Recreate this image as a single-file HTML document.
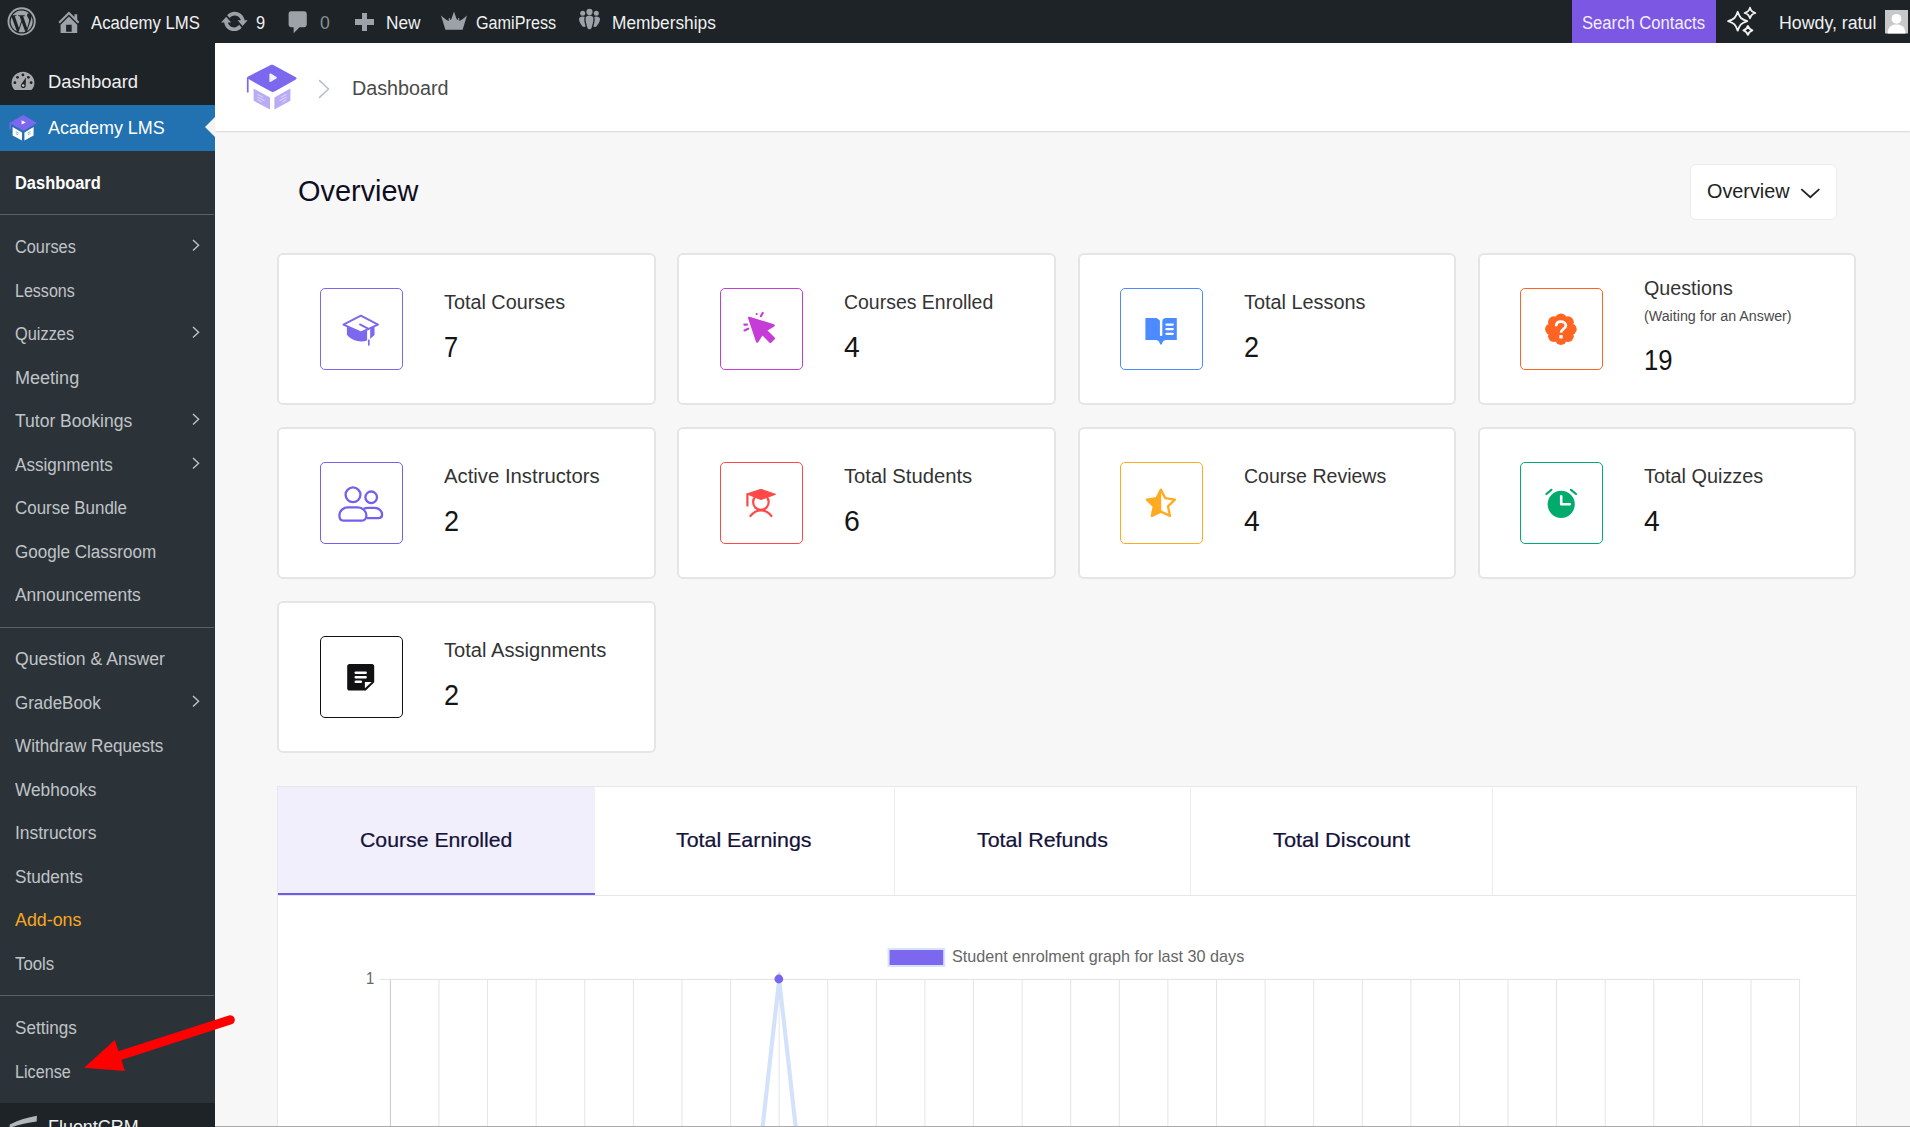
<!DOCTYPE html>
<html><head><meta charset="utf-8"><title>Dashboard</title>
<style>
*{box-sizing:border-box;margin:0;padding:0}
html,body{width:1910px;height:1127px;overflow:hidden;background:#f7f7f7;font-family:"Liberation Sans",sans-serif}
.tx{position:absolute;white-space:nowrap;transform-origin:0 50%}
.ab{position:absolute}
#adminbar{position:absolute;left:0;top:0;width:1910px;height:43px;background:#1d2327;z-index:5}
#side{position:absolute;left:0;top:43px;width:215px;height:1084px;background:#1d2327;z-index:3}
#sub{position:absolute;left:0;top:108px;width:215px;height:952px;background:#2c3338}
.sep{position:absolute;left:0;width:214px;height:1px;background:#596068}
#hdr{position:absolute;left:215px;top:43px;width:1695px;height:88px;background:#fff;box-shadow:0 1px 1.5px rgba(0,0,0,.13);z-index:2}
.card{position:absolute;width:379px;height:152px;background:#fff;border:2px solid #e5e5e7;border-radius:6px}
.ib{position:absolute;width:83px;height:82px;border:1.2px solid #7b68ee;border-radius:5px;background:#fff}
.ib svg{position:absolute;left:-1.2px;top:-1.2px;width:83px;height:82px}
</style></head><body>
<div id="adminbar">
<svg class="ab" style="left:7px;top:7px" width="30" height="30" viewBox="0 0 30 30"><circle cx="14.649999999999999" cy="14.399999999999999" r="14.1" fill="#a0a5aa"/><g transform="translate(2.450 2.200) scale(1.0167)"><path fill="#1d2327" d="M21.469 6.825c.84 1.537 1.318 3.3 1.318 5.175 0 3.979-2.156 7.456-5.363 9.325l3.295-9.527c.615-1.54.82-2.771.82-3.864 0-.405-.026-.78-.07-1.11m-7.981.105c.647-.03 1.232-.105 1.232-.105.582-.075.514-.93-.067-.899 0 0-1.755.135-2.88.135-1.064 0-2.85-.15-2.85-.15-.585-.03-.661.855-.075.885 0 0 .54.061 1.125.09l1.68 4.605-2.37 7.08L5.354 6.9c.649-.03 1.234-.1 1.234-.1.585-.075.516-.93-.065-.896 0 0-1.746.138-2.874.138-.2 0-.438-.008-.69-.015C4.911 3.15 8.235 1.215 12 1.215c2.809 0 5.365 1.072 7.286 2.833-.046-.003-.091-.009-.141-.009-1.06 0-1.812.923-1.812 1.914 0 .89.513 1.643 1.06 2.531.411.72.89 1.643.89 2.977 0 .915-.354 1.994-.821 3.479l-1.075 3.585-3.9-11.61.001.014zM12 22.784c-1.059 0-2.081-.153-3.048-.437l3.237-9.406 3.315 9.087c.024.053.05.101.078.149-1.12.393-2.325.609-3.582.609M1.211 12c0-1.564.336-3.05.935-4.39L7.29 21.709C3.694 19.960 1.212 16.271 1.211 12M12 0C5.385 0 0 5.385 0 12s5.385 12 12 12 12-5.385 12-12S18.615 0 12 0"/></g></svg>
<svg class="ab" style="left:55.4px;top:7.8px" width="27.8" height="27.8" viewBox="0 0 20 20"><path fill="#9ca2a7" fill-rule="evenodd" d="M16 8.5l1.53 1.53-1.06 1.06L10 4.62l-6.47 6.47-1.06-1.06L10 2.5l4 4v-2h2v4zm-6-2.46l6 5.99V18H4v-5.970zM12 17v-5H8v5h4z"/></svg>
<div class="tx" style="left:91.0px;top:11px;font-size:17.6px;line-height:25px;color:#f0f0f1;transform:scaleX(0.9524);">Academy LMS</div>
<svg class="ab" style="left:219.8px;top:6.9px" width="28.8" height="28.8" viewBox="0 0 20 20"><path fill="#9ca2a7" d="M10.2 3.28c3.53 0 6.43 2.61 6.92 6h2.08l-3.5 4-3.5-4h2.32c-.45-1.97-2.21-3.45-4.32-3.45-1.45 0-2.73.71-3.54 1.78L4.95 5.66C6.23 4.2 8.11 3.28 10.2 3.28zm-.4 13.44c-3.520 0-6.43-2.61-6.92-6H.8l3.5-4c1.17 1.33 2.33 2.67 3.5 4H5.48c.45 1.97 2.21 3.45 4.32 3.45 1.45 0 2.73-.71 3.54-1.78l1.71 1.95c-1.28 1.46-3.15 2.38-5.25 2.38z"/></svg>
<div class="tx" style="left:255.9px;top:11px;font-size:17.6px;line-height:25px;color:#f0f0f1;transform:scaleX(0.9316);">9</div>
<svg class="ab" style="left:288px;top:11px" width="20" height="23" viewBox="0 0 20 23"><path fill="#9ca2a7" d="M3 0.3 H16.2 C17.7 0.3 18.8 1.4 18.8 2.9 V13.6 C18.8 15.1 17.7 16.2 16.2 16.2 H11.6 L5.6 22.3 V16.2 H3 C1.5 16.2 0.6 15.1 0.6 13.6 V2.9 C0.6 1.4 1.5 0.3 3 0.3 Z"/></svg>
<div class="tx" style="left:320.0px;top:11px;font-size:17.6px;line-height:25px;color:#8c8f94;transform:scaleX(1.0033);">0</div>
<div class="ab" style="left:355px;top:19.3px;width:18.6px;height:5.7px;background:#9ca2a7"></div><div class="ab" style="left:361.5px;top:13.2px;width:5.7px;height:18.2px;background:#9ca2a7"></div>
<div class="tx" style="left:385.7px;top:11px;font-size:17.6px;line-height:25px;color:#f0f0f1;transform:scaleX(0.9817);">New</div>
<svg class="ab" style="left:440px;top:11px" width="28" height="20" viewBox="0 0 28 20"><path fill="#9ca2a7" d="M14 0.6 L16.4 7.4 C16.9 8.6 17.5 9 18.2 8.4 C17.5 7.8 18 6.8 18.9 7.2 C19.7 7.6 19.5 8.8 18.6 9 C19.6 10.6 21.6 9.4 27 4.6 L22.6 18.8 H5.4 L1 4.6 C6.4 9.4 8.4 10.6 9.4 9 C8.5 8.8 8.3 7.6 9.1 7.2 C10 6.8 10.5 7.8 9.8 8.4 C10.5 9 11.1 8.6 11.6 7.4 Z"/></svg>
<div class="tx" style="left:475.5px;top:11px;font-size:17.6px;line-height:25px;color:#f0f0f1;transform:scaleX(0.9204);">GamiPress</div>
<svg class="ab" style="left:578px;top:8px" width="23" height="22" viewBox="0 0 23 22"><g fill="#9ca2a7"><circle cx="11.5" cy="3.9" r="3.1"/><path d="M7.6 10.6 C7.6 8.6 9.3 7.6 11.5 7.6 C13.7 7.6 15.4 8.6 15.4 10.6 C15.4 14.2 14.4 17.4 13.4 20.2 C12.8 21.6 10.2 21.6 9.6 20.2 C8.6 17.4 7.6 14.2 7.6 10.6 Z"/><circle cx="4.7" cy="5.3" r="2.5"/><path d="M1 11 C1 9.2 2.6 8.4 4.7 8.4 C5.6 8.4 6.3 8.6 6.8 8.9 C6.3 9.6 6.2 10.4 6.3 11.4 C6.4 14 7 16.6 7.7 18.6 C6.4 19.4 4.8 19.2 4.2 18 C2.4 15.6 1 13.4 1 11 Z"/><circle cx="18.3" cy="5.3" r="2.5"/><path d="M22 11 C22 9.2 20.4 8.4 18.3 8.4 C17.4 8.4 16.7 8.6 16.2 8.9 C16.7 9.6 16.8 10.4 16.7 11.4 C16.6 14 16 16.6 15.3 18.6 C16.6 19.4 18.2 19.2 18.8 18 C20.6 15.6 22 13.4 22 11 Z"/></g></svg>
<div class="tx" style="left:611.9px;top:11px;font-size:17.6px;line-height:25px;color:#f0f0f1;transform:scaleX(0.9835);">Memberships</div>
<div class="ab" style="left:1571.5px;top:0;width:144px;height:43px;background:#7b57e3"></div>
<div class="tx" style="left:1582.0px;top:11px;font-size:17.6px;line-height:25px;color:#f3eefc;transform:scaleX(0.9454);">Search Contacts</div>
<svg class="ab" style="left:1722px;top:2px" width="40" height="39" viewBox="1722 2 40 39"><g fill="none" stroke="#f0f0f1" stroke-width="1.8" stroke-linejoin="round"><path d="M1737.7 11.799999999999999 C1739.8120000000001 17.891199999999998 1741.0792000000001 19.131999999999998 1747.3 21.2 C1741.0792000000001 23.268 1739.8120000000001 24.5088 1737.7 30.6 C1735.588 24.5088 1734.3208 23.268 1728.1000000000001 21.2 C1734.3208 19.131999999999998 1735.588 17.891199999999998 1737.7 11.799999999999999 Z"/><path d="M1750 7.7 C1751.188 11.1344 1751.9008 11.834 1755.4 13 C1751.9008 14.166 1751.188 14.8656 1750 18.3 C1748.812 14.8656 1748.0992 14.166 1744.6 13 C1748.0992 11.834 1748.812 11.1344 1750 7.7 Z"/><path d="M1747.9 25.9 C1748.89 28.816 1749.4840000000002 29.41 1752.4 30.4 C1749.4840000000002 31.389999999999997 1748.89 31.983999999999998 1747.9 34.9 C1746.91 31.983999999999998 1746.316 31.389999999999997 1743.4 30.4 C1746.316 29.41 1746.91 28.816 1747.9 25.9 Z"/></g></svg>
<div class="tx" style="left:1778.6px;top:11px;font-size:17.6px;line-height:25px;color:#f0f0f1;transform:scaleX(1.0094);">Howdy, ratul</div>
<svg class="ab" style="left:1884.5px;top:10px" width="23" height="23.5" viewBox="0 0 23 23.5"><rect width="23" height="23.5" fill="#c8c8c8"/><circle cx="11.5" cy="8.8" r="4.9" fill="#fff"/><path d="M2.6 23.5 C2.6 17 6.4 14.4 11.5 14.4 C16.6 14.4 20.4 17 20.4 23.5 Z" fill="#fff"/></svg>
</div>
<div id="side">
<svg class="ab" style="left:11px;top:28px" width="24" height="20" viewBox="0 0 24 20"><path fill="#a7aaad" d="M12 0.8 C5.6 0.8 0.6 5.8 0.6 12 C0.6 14.6 1.6 17 3.6 19 H20.4 C22.4 17 23.4 14.6 23.4 12 C23.4 5.8 18.4 0.8 12 0.8 Z"/><g fill="#1d2327"><circle cx="11.9" cy="3.9" r="1.4"/><circle cx="6.5" cy="6.3" r="1.4"/><circle cx="17.4" cy="6.3" r="1.4"/><circle cx="3.9" cy="11.7" r="1.4"/><circle cx="20.1" cy="11.7" r="1.4"/><path d="M14.9 6.6 L14.7 14.2 C14.9 15.8 13.8 17.1 12.3 17.1 C10.8 17.1 9.7 15.9 9.8 14.5 C9.9 13.7 10.2 13.2 10.6 12.7 Z"/></g><circle cx="12.2" cy="14.6" r="1.25" fill="#c8cacc"/></svg>
<div class="tx" style="left:47.8px;top:26px;font-size:18.8px;line-height:26px;color:#f0f0f1;transform:scaleX(0.9807);">Dashboard</div>
<div class="ab" style="left:0;top:62px;width:215px;height:46px;background:#2271b1"></div>
<div class="ab" style="left:204.6px;top:74px;width:0;height:0;border-top:10.2px solid transparent;border-bottom:10.2px solid transparent;border-right:10.4px solid #f3f3f3"></div>
<svg class="ab" style="left:9px;top:71.5px" width="28" height="26" viewBox="0 0 28 26"><path fill="#7b68ee" d="M13.4 0.5 C13.9 0.2 14.5 0.2 15 0.5 L27.2 7.4 C27.7 7.7 27.7 8.3 27.2 8.6 L15.2 15.6 C14.7 15.9 14.1 15.9 13.6 15.6 L1.2 8.6 C0.7 8.3 0.7 7.7 1.2 7.4 Z"/><path fill="#7b68ee" d="M0.5 8 H1.9 V14.4 H0.5 Z"/><path fill="#fff" d="M3.6 12 L13 17.4 V25.6 L3.6 20.4 Z M15.4 17.4 L24.6 12 V20.4 L15.4 25.6 Z"/><path fill="#fff" d="M12.6 5.2 L16.8 7.4 L12.6 9.6 Z"/><g fill="none" stroke="#7f9fc4" stroke-width=".9"><path d="M6.8 16.6 L9.6 18.2 M6.8 18.6 L9 19.8"/><path d="M21.4 16.6 L18.6 18.2 M21.4 18.6 L19.2 19.8"/></g></svg>
<div class="tx" style="left:47.8px;top:72px;font-size:18.8px;line-height:26px;color:#ffffff;transform:scaleX(0.9563);">Academy LMS</div>
<div id="sub"></div>
<div class="tx" style="left:15.2px;top:128px;font-size:17.6px;line-height:25px;color:#ffffff;font-weight:bold;transform:scaleX(0.9335);">Dashboard</div>
<div class="sep" style="top:171px"></div>
<div class="sep" style="top:584px"></div>
<div class="sep" style="top:952px"></div>
<div class="tx" style="left:15.2px;top:192px;font-size:17.6px;line-height:25px;color:#c0c4c8;transform:scaleX(0.9280);">Courses</div>
<svg class="ab" style="left:190.5px;top:195.4px" width="10" height="14" viewBox="0 0 10 14"><path d="M2 2 L7.6 7.2 L2 12.4" fill="none" stroke="#c3c6c9" stroke-width="1.35"/></svg>
<div class="tx" style="left:15.2px;top:236px;font-size:17.6px;line-height:25px;color:#c0c4c8;transform:scaleX(0.9121);">Lessons</div>
<div class="tx" style="left:15.2px;top:279px;font-size:17.6px;line-height:25px;color:#c0c4c8;transform:scaleX(0.9311);">Quizzes</div>
<svg class="ab" style="left:190.5px;top:282.4px" width="10" height="14" viewBox="0 0 10 14"><path d="M2 2 L7.6 7.2 L2 12.4" fill="none" stroke="#c3c6c9" stroke-width="1.35"/></svg>
<div class="tx" style="left:15.2px;top:323px;font-size:17.6px;line-height:25px;color:#c0c4c8;transform:scaleX(1.0254);">Meeting</div>
<div class="tx" style="left:15.2px;top:366px;font-size:17.6px;line-height:25px;color:#c0c4c8;transform:scaleX(0.9958);">Tutor Bookings</div>
<svg class="ab" style="left:190.5px;top:369.4px" width="10" height="14" viewBox="0 0 10 14"><path d="M2 2 L7.6 7.2 L2 12.4" fill="none" stroke="#c3c6c9" stroke-width="1.35"/></svg>
<div class="tx" style="left:15.2px;top:410px;font-size:17.6px;line-height:25px;color:#c0c4c8;transform:scaleX(0.9706);">Assignments</div>
<svg class="ab" style="left:190.5px;top:412.9px" width="10" height="14" viewBox="0 0 10 14"><path d="M2 2 L7.6 7.2 L2 12.4" fill="none" stroke="#c3c6c9" stroke-width="1.35"/></svg>
<div class="tx" style="left:15.2px;top:453px;font-size:17.6px;line-height:25px;color:#c0c4c8;transform:scaleX(0.9620);">Course Bundle</div>
<div class="tx" style="left:15.2px;top:497px;font-size:17.6px;line-height:25px;color:#c0c4c8;transform:scaleX(0.9686);">Google Classroom</div>
<div class="tx" style="left:15.2px;top:540px;font-size:17.6px;line-height:25px;color:#c0c4c8;transform:scaleX(0.9890);">Announcements</div>
<div class="tx" style="left:15.2px;top:604px;font-size:17.6px;line-height:25px;color:#c0c4c8;transform:scaleX(1.0021);">Question &amp; Answer</div>
<div class="tx" style="left:15.2px;top:648px;font-size:17.6px;line-height:25px;color:#c0c4c8;transform:scaleX(0.9634);">GradeBook</div>
<svg class="ab" style="left:190.5px;top:651.0px" width="10" height="14" viewBox="0 0 10 14"><path d="M2 2 L7.6 7.2 L2 12.4" fill="none" stroke="#c3c6c9" stroke-width="1.35"/></svg>
<div class="tx" style="left:15.2px;top:691px;font-size:17.6px;line-height:25px;color:#c0c4c8;transform:scaleX(0.9725);">Withdraw Requests</div>
<div class="tx" style="left:15.2px;top:735px;font-size:17.6px;line-height:25px;color:#c0c4c8;transform:scaleX(0.9825);">Webhooks</div>
<div class="tx" style="left:15.2px;top:778px;font-size:17.6px;line-height:25px;color:#c0c4c8;transform:scaleX(0.9909);">Instructors</div>
<div class="tx" style="left:15.2px;top:822px;font-size:17.6px;line-height:25px;color:#c0c4c8;transform:scaleX(0.9759);">Students</div>
<div class="tx" style="left:15.2px;top:865px;font-size:17.6px;line-height:25px;color:#f6a823;transform:scaleX(1.0128);">Add-ons</div>
<div class="tx" style="left:15.2px;top:909px;font-size:17.6px;line-height:25px;color:#c0c4c8;transform:scaleX(0.9539);">Tools</div>
<div class="tx" style="left:15.2px;top:973px;font-size:17.6px;line-height:25px;color:#c0c4c8;transform:scaleX(0.9720);">Settings</div>
<div class="tx" style="left:15.2px;top:1017px;font-size:17.6px;line-height:25px;color:#c0c4c8;transform:scaleX(0.9196);">License</div>
<svg class="ab" style="left:9px;top:1070px" width="30" height="14" viewBox="9 1113 30 14"><path fill="#b4b7ba" d="M9.4 1127 L9.8 1124.4 C18 1120.3 28 1117.4 36.9 1115.8 L36.7 1121.4 C28 1122.4 19 1124.4 12.5 1127 Z"/></svg>
<div class="tx" style="left:47.8px;top:1071px;font-size:18.8px;line-height:26px;color:#f0f0f1;transform:scaleX(0.9539);">FluentCRM</div>
</div><div id="hdr"></div>
<div style="position:absolute;left:0;top:0;z-index:2">
<svg class="ab" style="left:246px;top:64px" width="52" height="46" viewBox="0 0 52 46"><path fill="#b9abf4" d="M7.6 24.6 L24 33.6 V45.4 L7.6 36.8 Z M28.4 33.6 L44.4 24.6 V36.8 L28.4 45.4 Z"/><g stroke="#d9d1fa" stroke-width="1.1" fill="none"><path d="M11.4 30.2 L17.2 33.2 M11.4 33 L18.6 36.8 M11.4 35.8 L15.6 38"/><path d="M40.6 30.2 L34.8 33.2 M40.6 33 L33.4 36.8 M40.6 35.8 L36.4 38"/></g><path fill="#7b68ee" d="M24.2 1.3 C25.3 0.7 26.7 0.7 27.8 1.3 L49.8 13.2 C50.9 13.8 50.9 14.9 49.8 15.5 L28.6 27.6 C27.5 28.2 26.1 28.2 25 27.6 L3.4 15.6 C2.9 15.3 2.6 15 2.6 14.6 L2.6 28.4 H0.9 V14.4 C0.9 13.6 1.4 13 2.2 12.6 Z"/><path fill="#f3f0fd" d="M23.4 10.4 C23.4 9.6 24.2 9.2 24.9 9.6 L30.4 12.9 C31.1 13.3 31.1 14.2 30.4 14.6 L24.9 17.8 C24.2 18.2 23.4 17.8 23.4 17 Z"/></svg>
<svg class="ab" style="left:317px;top:79px" width="14" height="20" viewBox="0 0 14 20"><path d="M2.6 1.6 L11.6 10 L2.6 18.4" fill="none" stroke="#b9bfca" stroke-width="1.6" stroke-linejoin="round" stroke-linecap="round"/></svg>
<div class="tx" style="left:351.7px;top:75px;font-size:19.4px;line-height:27px;color:#4a4a4a;transform:scaleX(1.0178);">Dashboard</div>
</div>
<div class="tx" style="left:298.0px;top:171px;font-size:28.6px;line-height:40px;color:#0e0e22;transform:scaleX(1.0112);">Overview</div>
<div class="ab" style="left:1690px;top:164px;width:147px;height:56px;background:#fff;border:1px solid #ececec;border-radius:6px"></div>
<div class="tx" style="left:1707.1px;top:178px;font-size:19.4px;line-height:27px;color:#222;transform:scaleX(1.0210);">Overview</div>
<svg class="ab" style="left:1798px;top:186px" width="24" height="14" viewBox="1798 186 24 14"><path d="M1801.3 189.2 L1810.3 197.2 L1819.3 189.2" fill="none" stroke="#222" stroke-width="1.8"/></svg>
<div class="card" style="left:277px;top:253px;width:379px"></div>
<div class="ib" style="left:320px;top:288px;border-color:#7b68ee"><svg viewBox="0 0 83 82"><path fill="#7b68ee" d="M26.9 38.6 L40.9 44.9 L47.1 42 V52.4 C43 53.8 38 53.8 34 52 C30.6 50.6 27.6 48.4 26.9 46.6 Z M50.2 40.6 L54.5 38.6 V47 L50.2 50.9 Z"/><g fill="none" stroke="#7b68ee" stroke-width="1.9" stroke-linejoin="round" stroke-linecap="round"><path d="M23.4 36.7 L40.9 27.6 L58 36.7 L40.9 44.4 Z"/><path d="M40 36.4 L47.6 40.4"/></g><path d="M48.8 51.6 V57.6" stroke="#7b68ee" stroke-width="1.7"/></svg></div>
<div class="tx" style="left:444.2px;top:289px;font-size:19.4px;line-height:27px;color:#333;transform:scaleX(1.0217);">Total Courses</div>
<div class="tx" style="left:443.7px;top:327px;font-size:28.6px;line-height:40px;color:#151515;transform:scaleX(0.8883);">7</div>
<div class="card" style="left:677px;top:253px;width:379px"></div>
<div class="ib" style="left:720px;top:288px;border-color:#c53dd6"><svg viewBox="0 0 83 82"><path fill="#c53dd6" stroke="#c53dd6" stroke-width="2.4" stroke-linejoin="round" d="M29.2 29.9 L53.6 37.4 L45.7 42.3 L53.8 50.4 L50.4 53.8 L42.3 45.7 L37.2 53.6 Z"/><g stroke="#c53dd6" stroke-width="2.1" stroke-linecap="round"><path d="M36.6 25.9 L36.7 26"/><path d="M40.9 28.2 L42.7 24.9"/><path d="M24.3 36.6 L27 36.6"/><path d="M24.5 42.5 L28.2 40.7"/></g></svg></div>
<div class="tx" style="left:844.2px;top:289px;font-size:19.4px;line-height:27px;color:#333;transform:scaleX(1.0034);">Courses Enrolled</div>
<div class="tx" style="left:843.7px;top:327px;font-size:28.6px;line-height:40px;color:#151515;transform:scaleX(0.9891);">4</div>
<div class="card" style="left:1078px;top:253px;width:378px"></div>
<div class="ib" style="left:1120px;top:288px;border-color:#4b8bff"><svg viewBox="0 0 83 82"><path fill="#4b8bff" d="M25.4 30 H36.6 L39.9 32.6 V47.2 C39.9 48.2 42.3 48.2 42.3 47.2 V33.6 C42.3 31.4 43.8 30 45.8 30 H56.8 V52 H46.4 C44 52 42.6 53.4 41.6 56.6 H40.2 C39.4 53.4 38 52 35.6 52 H25.4 Z"/><g stroke="#fff" stroke-width="2.2" stroke-linecap="round"><path d="M46.4 36.6 H52.8 M46.4 41.2 H52.8 M46.4 45.8 H52.8"/></g></svg></div>
<div class="tx" style="left:1244.2px;top:289px;font-size:19.4px;line-height:27px;color:#333;transform:scaleX(1.0242);">Total Lessons</div>
<div class="tx" style="left:1243.7px;top:327px;font-size:28.6px;line-height:40px;color:#151515;transform:scaleX(0.9450);">2</div>
<div class="card" style="left:1478px;top:253px;width:378px"></div>
<div class="ib" style="left:1520px;top:288px;border-color:#ff6422"><svg viewBox="0 0 83 82"><g fill="#ff6422"><circle cx="40.9" cy="41.2" r="12"/><circle cx="40.90" cy="31.20" r="5.8"/><circle cx="47.97" cy="34.13" r="5.8"/><circle cx="50.90" cy="41.20" r="5.8"/><circle cx="47.97" cy="48.27" r="5.8"/><circle cx="40.90" cy="51.20" r="5.8"/><circle cx="33.83" cy="48.27" r="5.8"/><circle cx="30.90" cy="41.20" r="5.8"/><circle cx="33.83" cy="34.13" r="5.8"/></g><path d="M36.1 38.2 C36.1 35 38.4 33.6 40.9 33.6 C43.6 33.6 45.9 35.2 45.9 37.6 C45.9 40.6 41.2 41 41 44.6" fill="none" stroke="#fff" stroke-width="2.7" stroke-linecap="butt"/><rect x="39.3" y="47.1" width="3.4" height="3.4" fill="#fff"/></svg></div>
<div class="tx" style="left:1644.2px;top:275px;font-size:19.4px;line-height:27px;color:#333;transform:scaleX(1.0166);">Questions</div>
<div class="tx" style="left:1644.2px;top:306px;font-size:14px;line-height:20px;color:#4a4a4a;transform:scaleX(1.0181);">(Waiting for an Answer)</div>
<div class="tx" style="left:1643.8px;top:340px;font-size:28.6px;line-height:40px;color:#151515;transform:scaleX(0.8989);">19</div>
<div class="card" style="left:277px;top:427px;width:379px"></div>
<div class="ib" style="left:320px;top:462px;border-color:#7460ee"><svg viewBox="0 0 83 82"><g fill="none" stroke="#7460ee" stroke-width="2.3"><circle cx="33" cy="32.8" r="7.4"/><circle cx="51.2" cy="35.3" r="5.8"/><path d="M19.4 53.6 C19.4 48.4 23.6 45.4 28 45.4 H37.6 C42.4 45.4 46.4 49 46.4 53.6 C46.4 56.6 44.4 58.7 42 58.7 H23.4 C21 58.7 19.4 56.6 19.4 53.6 Z"/><path d="M43.6 46.8 C45 46.2 46.4 45.8 47.8 45.8 H54.8 C58.8 45.8 62.1 49.2 62.1 52.6 C62.1 54.8 60.6 56.2 58.6 56.2 H47"/></g></svg></div>
<div class="tx" style="left:444.2px;top:463px;font-size:19.4px;line-height:27px;color:#333;transform:scaleX(1.0471);">Active Instructors</div>
<div class="tx" style="left:443.7px;top:501px;font-size:28.6px;line-height:40px;color:#151515;transform:scaleX(0.9450);">2</div>
<div class="card" style="left:677px;top:427px;width:379px"></div>
<div class="ib" style="left:720px;top:462px;border-color:#ff4848"><svg viewBox="0 0 83 82"><g fill="none" stroke="#ff4848" stroke-width="2.2" stroke-linecap="round"><circle cx="40.9" cy="40.1" r="7.8"/><path d="M30.4 54 C33.4 50.2 37 48.3 40.9 48.3 C44.8 48.3 48.4 50.2 51.4 54"/><path d="M27.4 32.6 V43.6"/></g><path fill="#ff4848" stroke="#ff4848" stroke-width="1" stroke-linejoin="round" d="M26.8 31.9 L40.9 27.3 L55.6 32.3 L40.9 37.6 Z"/></svg></div>
<div class="tx" style="left:844.2px;top:463px;font-size:19.4px;line-height:27px;color:#333;transform:scaleX(1.0435);">Total Students</div>
<div class="tx" style="left:843.7px;top:501px;font-size:28.6px;line-height:40px;color:#151515;transform:scaleX(0.9954);">6</div>
<div class="card" style="left:1078px;top:427px;width:378px"></div>
<div class="ib" style="left:1120px;top:462px;border-color:#ffab21"><svg viewBox="0 0 83 82"><defs><clipPath id="sl"><rect x="20" y="20" width="21.2" height="42"/></clipPath><clipPath id="sr"><rect x="40.9" y="20" width="22" height="42"/></clipPath></defs><path clip-path="url(#sr)" fill="none" stroke="#ffab21" stroke-width="2.3" stroke-linejoin="round" d="M40.9 27.6 L45.1 36.1 L54.9 37.7 L48 44.3 L50 53.9 L40.9 49.6 L31.8 53.9 L33.8 44.3 L26.9 37.7 L36.7 36.1 Z"/><path clip-path="url(#sl)" fill="#ffab21" stroke="#ffab21" stroke-width="2.3" stroke-linejoin="round" d="M40.9 27.6 L45.1 36.1 L54.9 37.7 L48 44.3 L50 53.9 L40.9 49.6 L31.8 53.9 L33.8 44.3 L26.9 37.7 L36.7 36.1 Z"/></svg></div>
<div class="tx" style="left:1244.2px;top:463px;font-size:19.4px;line-height:27px;color:#333;transform:scaleX(1.0076);">Course Reviews</div>
<div class="tx" style="left:1243.7px;top:501px;font-size:28.6px;line-height:40px;color:#151515;transform:scaleX(0.9891);">4</div>
<div class="card" style="left:1478px;top:427px;width:378px"></div>
<div class="ib" style="left:1520px;top:462px;border-color:#00ab6b"><svg viewBox="0 0 83 82"><circle cx="41.2" cy="42.3" r="13.6" fill="#00ab6b"/><path d="M41.2 34.4 V42.3 H49.8" fill="none" stroke="#fff" stroke-width="2.6" stroke-linecap="round" stroke-linejoin="round"/><g stroke="#00ab6b" stroke-width="2.2" stroke-linecap="round"><path d="M26.4 32 L31.4 27.8"/><path d="M51 27.8 L56 32"/></g></svg></div>
<div class="tx" style="left:1644.2px;top:463px;font-size:19.4px;line-height:27px;color:#333;transform:scaleX(1.0245);">Total Quizzes</div>
<div class="tx" style="left:1643.7px;top:501px;font-size:28.6px;line-height:40px;color:#151515;transform:scaleX(0.9891);">4</div>
<div class="card" style="left:277px;top:601px;width:379px"></div>
<div class="ib" style="left:320px;top:636px;border-color:#111114"><svg viewBox="0 0 83 82"><path fill="#111114" d="M29.4 28.1 H52 C53.2 28.1 54.2 29.1 54.2 30.3 V46.2 L45.8 54.6 H29.4 C28.2 54.6 27.2 53.6 27.2 52.4 V30.3 C27.2 29.1 28.2 28.1 29.4 28.1 Z"/><path fill="#fff" d="M44.9 46 H51.7 L44.9 52.2 Z"/><g stroke="#fff" stroke-width="2.6" stroke-linecap="round"><path d="M35.8 36.8 H45.6 M35.8 41.2 H45.6 M35.8 45.7 H40.8"/></g></svg></div>
<div class="tx" style="left:444.2px;top:637px;font-size:19.4px;line-height:27px;color:#333;transform:scaleX(1.0380);">Total Assignments</div>
<div class="tx" style="left:443.7px;top:675px;font-size:28.6px;line-height:40px;color:#151515;transform:scaleX(0.9450);">2</div><div class="ab" style="left:277px;top:786px;width:1579.5px;height:400px;background:#fff;border:1px solid #e7e7e7"></div>
<div class="ab" style="left:278px;top:894.6px;width:1577.5px;height:1px;background:#e6e6e6"></div>
<div class="ab" style="left:278px;top:787px;width:316.5px;height:108px;background:#f1effc;border-bottom:2px solid #6c5ce7"></div>
<div class="ab" style="left:894px;top:787.5px;width:1px;height:107px;background:#ebebeb"></div>
<div class="ab" style="left:1190px;top:787.5px;width:1px;height:107px;background:#ebebeb"></div>
<div class="ab" style="left:1492px;top:787.5px;width:1px;height:107px;background:#ebebeb"></div>
<div class="tx" style="left:359.6px;top:826px;font-size:20.2px;line-height:28px;color:#14123a;transform:scaleX(1.0522);-webkit-text-stroke:.22px #14123a;">Course Enrolled</div>
<div class="tx" style="left:676.4px;top:826px;font-size:20.2px;line-height:28px;color:#14123a;transform:scaleX(1.0592);-webkit-text-stroke:.22px #14123a;">Total Earnings</div>
<div class="tx" style="left:977.0px;top:826px;font-size:20.2px;line-height:28px;color:#14123a;transform:scaleX(1.0605);-webkit-text-stroke:.22px #14123a;">Total Refunds</div>
<div class="tx" style="left:1273.0px;top:826px;font-size:20.2px;line-height:28px;color:#14123a;transform:scaleX(1.0800);-webkit-text-stroke:.22px #14123a;">Total Discount</div>
<svg class="ab" style="left:278px;top:896px" width="1577" height="231" viewBox="278 896 1577 231">
<path d="M390.40 979.4 V1127" stroke="#c9c9c9" stroke-width="1"/><path d="M438.99 979.4 V1127" stroke="#e4e4e4" stroke-width="1"/><path d="M487.59 979.4 V1127" stroke="#e4e4e4" stroke-width="1"/><path d="M536.18 979.4 V1127" stroke="#e4e4e4" stroke-width="1"/><path d="M584.77 979.4 V1127" stroke="#e4e4e4" stroke-width="1"/><path d="M633.37 979.4 V1127" stroke="#e4e4e4" stroke-width="1"/><path d="M681.96 979.4 V1127" stroke="#e4e4e4" stroke-width="1"/><path d="M730.55 979.4 V1127" stroke="#e4e4e4" stroke-width="1"/><path d="M779.14 979.4 V1127" stroke="#e4e4e4" stroke-width="1"/><path d="M827.74 979.4 V1127" stroke="#e4e4e4" stroke-width="1"/><path d="M876.33 979.4 V1127" stroke="#e4e4e4" stroke-width="1"/><path d="M924.92 979.4 V1127" stroke="#e4e4e4" stroke-width="1"/><path d="M973.52 979.4 V1127" stroke="#e4e4e4" stroke-width="1"/><path d="M1022.11 979.4 V1127" stroke="#e4e4e4" stroke-width="1"/><path d="M1070.70 979.4 V1127" stroke="#e4e4e4" stroke-width="1"/><path d="M1119.30 979.4 V1127" stroke="#e4e4e4" stroke-width="1"/><path d="M1167.89 979.4 V1127" stroke="#e4e4e4" stroke-width="1"/><path d="M1216.48 979.4 V1127" stroke="#e4e4e4" stroke-width="1"/><path d="M1265.08 979.4 V1127" stroke="#e4e4e4" stroke-width="1"/><path d="M1313.67 979.4 V1127" stroke="#e4e4e4" stroke-width="1"/><path d="M1362.26 979.4 V1127" stroke="#e4e4e4" stroke-width="1"/><path d="M1410.86 979.4 V1127" stroke="#e4e4e4" stroke-width="1"/><path d="M1459.45 979.4 V1127" stroke="#e4e4e4" stroke-width="1"/><path d="M1508.04 979.4 V1127" stroke="#e4e4e4" stroke-width="1"/><path d="M1556.63 979.4 V1127" stroke="#e4e4e4" stroke-width="1"/><path d="M1605.23 979.4 V1127" stroke="#e4e4e4" stroke-width="1"/><path d="M1653.82 979.4 V1127" stroke="#e4e4e4" stroke-width="1"/><path d="M1702.41 979.4 V1127" stroke="#e4e4e4" stroke-width="1"/><path d="M1751.01 979.4 V1127" stroke="#e4e4e4" stroke-width="1"/><path d="M1799.60 979.4 V1127" stroke="#e4e4e4" stroke-width="1"/>
<path d="M379.6 979.4 H1800" stroke="#e0e0e0" stroke-width="1"/>
<defs><clipPath id="cl"><rect x="300" y="972.3" width="1600" height="200"/></clipPath></defs>
<path clip-path="url(#cl)" d="M730.55 1413 L779.14 979.4 L827.74 1413" fill="none" stroke="rgba(202,221,250,.85)" stroke-width="4.1" stroke-linejoin="miter" stroke-miterlimit="10"/>
<circle cx="778.84" cy="979" r="4.4" fill="#7866ee"/>
<rect x="888.6" y="949" width="55.6" height="17" fill="#7b68ee" stroke="#d6e3fb" stroke-width="2"/>
</svg>
<div class="tx" style="left:951.6px;top:945px;font-size:16.1px;line-height:23px;color:#666;transform:scaleX(1.0052);">Student enrolment graph for last 30 days</div>
<div class="tx" style="left:366.4px;top:967px;font-size:16.1px;line-height:23px;color:#666;transform:scaleX(0.9177);">1</div>
<div class="ab" style="left:215px;top:1126px;width:1695px;height:1px;background:#a9a9a9;z-index:6"></div>
<svg class="ab" style="left:60px;top:1000px;z-index:9" width="200" height="90" viewBox="60 1000 200 90"><path d="M230.2 1019.9 L119 1055.8" stroke="#ff0000" stroke-width="9.2" stroke-linecap="round" fill="none"/><path d="M84.1 1067.7 L114.8 1040.1 L124.9 1071 Z" fill="#ff0000"/></svg></body></html>
